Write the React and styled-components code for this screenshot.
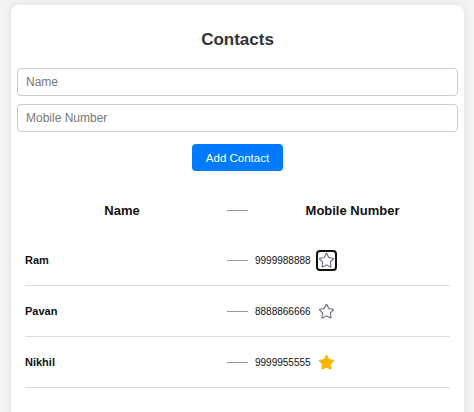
import React, { useState } from 'react'
import styled, { createGlobalStyle } from 'styled-components'
import { Star } from 'lucide-react'

const GlobalStyle = createGlobalStyle`
  html, body {
    margin: 0;
    padding: 0;
    background: #f4f4f4;
    font-family: "Liberation Sans", Arial, sans-serif;
  }
`

const Card = styled.div`
  box-sizing: border-box;
  width: 453px;
  min-height: 420px;
  margin: 5px 0 0 11px;
  padding: 24px 6px 20px;
  background: #ffffff;
  border-radius: 8px;
  box-shadow: 0 0 10px rgba(0, 0, 0, 0.1);
`

const Title = styled.h2`
  margin: 0 0 17px;
  text-align: center;
  font-size: 17px;
  line-height: 22px;
  font-weight: bold;
  color: #333333;
`

const Form = styled.div`
  display: flex;
  flex-direction: column;
  gap: 8px;
`

const Input = styled.input`
  box-sizing: border-box;
  width: 100%;
  height: 28px;
  padding: 0 8px;
  border: 1px solid #cccccc;
  border-radius: 4px;
  font-family: inherit;
  font-size: 12px;
  color: #333;
  outline: none;

  &::placeholder {
    color: #777777;
  }
`

const AddButton = styled.button`
  align-self: center;
  width: 91px;
  height: 27px;
  margin-top: 4px;
  border: none;
  border-radius: 4px;
  background: #007bff;
  color: #ffffff;
  font-family: inherit;
  font-size: 11.5px;
  cursor: pointer;
`

const List = styled.div`
  margin: 14px 8px 0;
`

const Row = styled.div`
  display: flex;
  align-items: center;
  height: 50px;
  border-bottom: ${({ $header }) => ($header ? 'none' : '1px solid #dddddd')};
`

const NameCell = styled.div`
  width: 194px;
  margin-right: 8px;
  text-align: ${({ $header }) => ($header ? 'center' : 'left')};
  font-size: ${({ $header }) => ($header ? '13px' : '11px')};
  font-weight: bold;
  color: #111111;
`

const Dash = styled.span`
  flex: none;
  width: 21px;
  height: 1px;
  margin-right: 7px;
  background: #9a9a9a;
`

const MobileCell = styled.div`
  flex: 1;
  display: flex;
  align-items: center;
  justify-content: ${({ $header }) => ($header ? 'center' : 'flex-start')};
  gap: 5px;
  font-size: ${({ $header }) => ($header ? '13px' : '10px')};
  font-weight: ${({ $header }) => ($header ? 'bold' : 'normal')};
  color: #111111;
`

const StarButton = styled.button`
  display: flex;
  align-items: center;
  justify-content: center;
  box-sizing: border-box;
  width: 21px;
  height: 21px;
  padding: 0;
  background: transparent;
  border: 2px solid ${({ $focused }) => ($focused ? '#111111' : 'transparent')};
  border-radius: 4px;
  cursor: pointer;
`

const contacts = [
  { name: 'Ram', mobile: '9999988888', favourite: false, focused: true },
  { name: 'Pavan', mobile: '8888866666', favourite: false },
  { name: 'Nikhil', mobile: '9999955555', favourite: true },
]

const App = () => {
  const [name, setName] = useState('')
  const [mobile, setMobile] = useState('')

  return (
    <>
      <GlobalStyle />
      <Card>
        <Title>Contacts</Title>
        <Form>
          <Input placeholder="Name" value={name} onChange={e => setName(e.target.value)} />
          <Input placeholder="Mobile Number" value={mobile} onChange={e => setMobile(e.target.value)} />
          <AddButton type="button">Add Contact</AddButton>
        </Form>
        <List>
          <Row $header>
            <NameCell $header>Name</NameCell>
            <Dash />
            <MobileCell $header>Mobile Number</MobileCell>
          </Row>
          {contacts.map(contact => (
            <Row key={contact.name}>
              <NameCell>{contact.name}</NameCell>
              <Dash />
              <MobileCell>
                {contact.mobile}
                <StarButton type="button" $focused={contact.focused}>
                  <Star
                    size={19}
                    strokeWidth={1.6}
                    color={contact.favourite ? '#f8b60c' : '#6b7080'}
                    fill={contact.favourite ? '#f8b60c' : 'none'}
                  />
                </StarButton>
              </MobileCell>
            </Row>
          ))}
        </List>
      </Card>
    </>
  )
}

export default App
